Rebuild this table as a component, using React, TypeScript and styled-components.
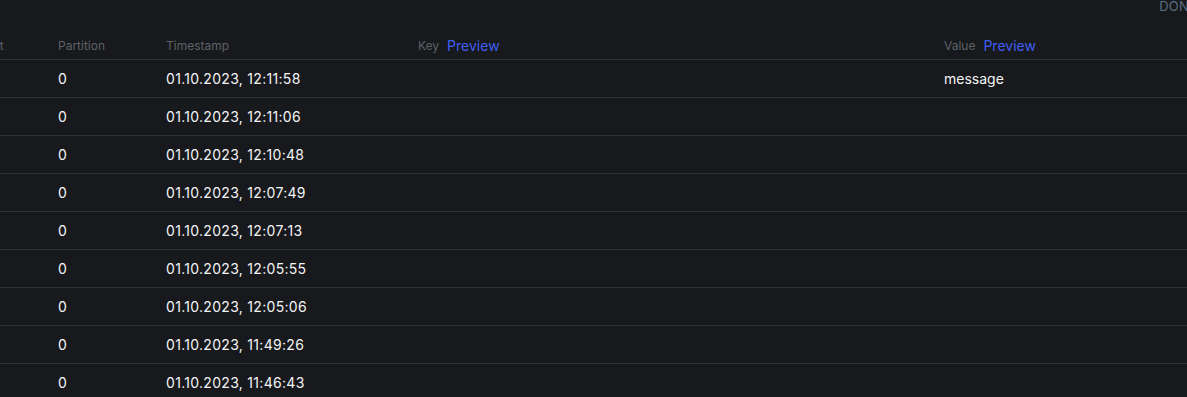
import React, { useLayoutEffect, useRef } from "react";
import styled, { createGlobalStyle } from "styled-components";

const Global = createGlobalStyle`
  html, body { margin: 0; padding: 0; background: #17191c; overflow: hidden; }
  body { font-family: Inter, "Noto Sans", sans-serif; }
  * { box-sizing: border-box; }
`;

const Viewport = styled.div`
  width: 1187px;
  height: 397px;
  overflow-x: auto;
  overflow-y: hidden;
  scrollbar-width: none;
  &::-webkit-scrollbar { display: none; }
`;

const Content = styled.div`
  width: 1254px;
  display: flex;
  flex-direction: column;
`;

const StatusBar = styled.div`
  height: 32px;
  display: flex;
  justify-content: flex-end;
  padding-right: 10px;
  font-size: 13px;
  line-height: 13px;
  color: #5a6d82;
  letter-spacing: 0.2px;
`;

const Grid = styled.div`
  display: grid;
  grid-template-columns: 89px 108px 252px 526px 1fr;
`;

const HeadCell = styled.div`
  height: 28px;
  display: flex;
  align-items: center;
  gap: 8px;
  padding: 0 16px;
  font-size: 12px;
  color: #5d6168;
  border-bottom: 1px solid #2e3135;
  white-space: nowrap;
`;

const PreviewLink = styled.span`
  font-size: 14px;
  color: #3f5ef2;
  cursor: pointer;
`;

const Cell = styled.div<{ $numeric?: boolean }>`
  height: 38px;
  display: flex;
  align-items: center;
  padding: 0 16px;
  font-size: 14px;
  letter-spacing: ${(p) => (p.$numeric ? "0.3px" : "0")};
  color: #f3f4f6;
  border-bottom: 1px solid #2e3135;
  white-space: nowrap;
`;

const rows = [
  { offset: 8, ts: "01.10.2023, 12:11:58", key: "", value: "message" },
  { offset: 7, ts: "01.10.2023, 12:11:06", key: "", value: "" },
  { offset: 6, ts: "01.10.2023, 12:10:48", key: "", value: "" },
  { offset: 5, ts: "01.10.2023, 12:07:49", key: "", value: "" },
  { offset: 4, ts: "01.10.2023, 12:07:13", key: "", value: "" },
  { offset: 3, ts: "01.10.2023, 12:05:55", key: "", value: "" },
  { offset: 2, ts: "01.10.2023, 12:05:06", key: "", value: "" },
  { offset: 1, ts: "01.10.2023, 11:49:26", key: "", value: "" },
  { offset: 0, ts: "01.10.2023, 11:46:43", key: "", value: "" },
];

export default function App() {
  const ref = useRef<HTMLDivElement>(null);
  useLayoutEffect(() => {
    if (ref.current) ref.current.scrollLeft = 47;
  }, []);
  return (
    <>
      <Global />
      <Viewport ref={ref}>
        <Content>
          <StatusBar>DONE</StatusBar>
          <Grid>
            <HeadCell>Offset</HeadCell>
            <HeadCell>Partition</HeadCell>
            <HeadCell>Timestamp</HeadCell>
            <HeadCell>
              Key <PreviewLink>Preview</PreviewLink>
            </HeadCell>
            <HeadCell>
              Value <PreviewLink>Preview</PreviewLink>
            </HeadCell>
            {rows.map((r) => (
              <React.Fragment key={r.offset}>
                <Cell $numeric>{r.offset}</Cell>
                <Cell $numeric>0</Cell>
                <Cell $numeric>{r.ts}</Cell>
                <Cell>{r.key}</Cell>
                <Cell>{r.value}</Cell>
              </React.Fragment>
            ))}
          </Grid>
        </Content>
      </Viewport>
    </>
  );
}
